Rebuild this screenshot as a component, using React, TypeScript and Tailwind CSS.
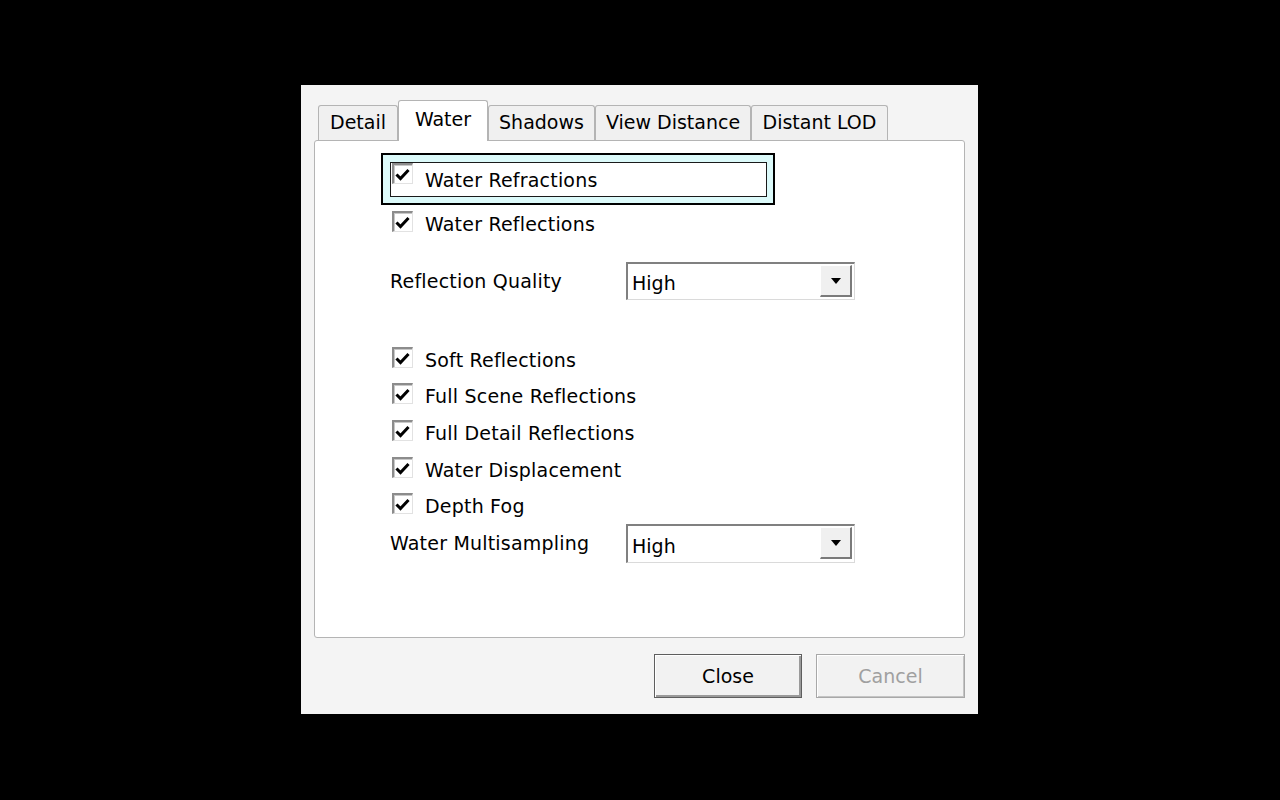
import React from "react";

const font = { fontFamily: '"DejaVu Sans", Verdana, sans-serif' };

// Classic sunken checkbox with a thick black tick
function CheckBox() {
  return (
    <div className="relative w-[21px] h-[21px] shrink-0 bg-white border-t-2 border-l-2 border-t-[#8c8c8c] border-l-[#8c8c8c] border-b border-r border-b-[#e2e2e2] border-r-[#e2e2e2] shadow-[inset_1px_1px_0_#c8c8c8]">
      <svg className="absolute -left-[2px] -top-[2px]" width="21" height="21" viewBox="0 0 21 21">
        <polyline points="5.5,12.5 8.5,15.5 15.5,8" fill="none" stroke="#000" strokeWidth="3" strokeLinecap="square" />
      </svg>
    </div>
  );
}

function CheckRow({ label, className = "" }: { label: string; className?: string }) {
  return (
    <div className={`flex items-start h-[26px] pl-[11px] ${className}`}>
      <CheckBox />
      <span className="ml-[12px] leading-[27px] text-[19px] tracking-[0.2px] text-black">{label}</span>
    </div>
  );
}

function Dropdown({ value }: { value: string }) {
  return (
    <div className="flex w-[229px] h-full bg-white border-t-2 border-l-2 border-t-[#808080] border-l-[#808080] border-b border-r border-b-[#dadada] border-r-[#dadada]">
      <div className="flex-1 flex items-center pl-[4px] pt-[4px] text-[19px] text-black">{value}</div>
      <div className="mt-[1px] mr-[2px] w-[32px] h-[32px] flex items-center justify-center bg-[#f0f0f0] border-t border-l border-t-white border-l-white border-b-2 border-r-2 border-b-[#7a7a7a] border-r-[#7a7a7a]">
        <svg width="10" height="6" viewBox="0 0 10 6">
          <polygon points="0,0 10,0 5,6" fill="#000" />
        </svg>
      </div>
    </div>
  );
}

function SelectRow({ label, value, className = "", h = "h-[38px]" }: { label: string; value: string; className?: string; h?: string }) {
  return (
    <div className={`flex items-center ${h} ${className}`}>
      <span className="w-[245px] pl-[9px] text-[19px] tracking-[0.2px] text-black">{label}</span>
      <Dropdown value={value} />
    </div>
  );
}

const tabs = [
  { name: "Detail", w: "w-[80px]" },
  { name: "Water", w: "w-[90px]" },
  { name: "Shadows", w: "w-[107px]" },
  { name: "View Distance", w: "w-[156px]" },
  { name: "Distant LOD", w: "w-[137px]" },
];

export default function App() {
  const active = "Water";

  return (
    <div className="w-full h-[800px] bg-black pt-[85px] pl-[301px]" style={font}>
      <div className="w-[677px] h-[629px] bg-[#f4f4f4] pt-[15px] px-[13px]">
        {/* tab strip */}
        <div className="flex items-end h-[40px] pl-[4px]">
          {tabs.map((t) =>
            t.name === active ? (
              <div
                key={t.name}
                className={`${t.w} relative z-10 h-[41px] -mb-[1px] bg-white border border-b-0 border-[#b4b4b4] rounded-t-[3px] flex items-center justify-center pb-[4px] text-[19px] text-black`}
              >
                {t.name}
              </div>
            ) : (
              <div
                key={t.name}
                className={`${t.w} h-[35px] bg-[#f0f0f0] border border-b-0 border-[#b4b4b4] rounded-t-[3px] flex items-center justify-center pb-[2px] text-[19px] text-black`}
              >
                {t.name}
              </div>
            )
          )}
        </div>

        {/* tab page */}
        <div className="h-[498px] bg-white border border-[#b4b4b4] rounded-[3px] pt-[12px] pl-[66px]">
          <div className="flex flex-col">
            <div className="w-[394px] h-[52px] border-2 border-black bg-[#dcfafa] pt-[7px] pl-[7px] pr-[6px] pb-[6px]">
              <div className="h-full bg-white border border-[#1a1a1a] flex items-start pl-[1px]">
                <CheckBox />
                <span className="ml-[12px] leading-[35px] text-[19px] tracking-[0.2px] text-black">Water Refractions</span>
              </div>
            </div>
            <CheckRow label="Water Reflections" className="mt-[6px]" />
            <SelectRow label="Reflection Quality" value="High" className="mt-[25px]" />
            <CheckRow label="Soft Reflections" className="mt-[47px]" />
            <CheckRow label="Full Scene Reflections" className="mt-[10px]" />
            <CheckRow label="Full Detail Reflections" className="mt-[11px]" />
            <CheckRow label="Water Displacement" className="mt-[11px]" />
            <CheckRow label="Depth Fog" className="mt-[10px]" />
            <SelectRow label="Water Multisampling" value="High" className="mt-[5px]" h="h-[39px]" />
          </div>
        </div>

        {/* dialog buttons */}
        <div className="flex justify-end gap-[14px] mt-[16px]">
          <button className="w-[148px] h-[44px] bg-[#f2f2f2] border border-[#5e5e5e] shadow-[inset_1px_1px_0_#ffffff,inset_-2px_-2px_0_#9a9a9a] text-[19px] text-black">
            Close
          </button>
          <button className="w-[149px] h-[44px] bg-[#f2f2f2] border border-[#a8a8a8] shadow-[inset_1px_1px_0_#ffffff,inset_-1px_-1px_0_#c4c4c4] text-[19px] text-[#a0a0a0]">
            Cancel
          </button>
        </div>
      </div>
    </div>
  );
}
